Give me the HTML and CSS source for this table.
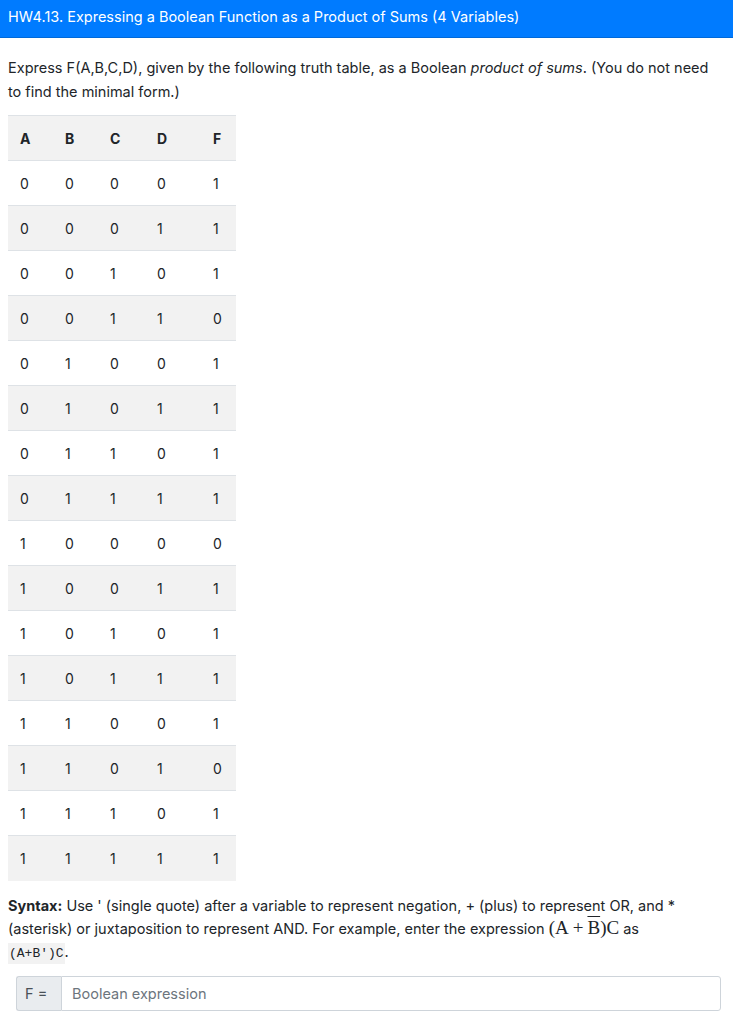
FILE: index.html
```html
<!DOCTYPE html>
<html>
<head>
<meta charset="utf-8">
<link rel="stylesheet" href="styles.css">
</head>
<body>
<div class="header">HW4.13. Expressing a Boolean Function as a Product of Sums (4 Variables)</div>
<div class="body">
<p class="intro">Express F(A,B,C,D), given by the following truth table, as a Boolean <em>product of sums</em>. (You do not need to find the minimal form.)</p>
<table class="tt">
<tbody>
<tr class="head"><th class="c1">A</th><th class="c2">B</th><th class="c3">C</th><th class="c4">D</th><th class="c5">F</th></tr>
<tr><td>0</td><td>0</td><td>0</td><td>0</td><td>1</td></tr>
<tr><td>0</td><td>0</td><td>0</td><td>1</td><td>1</td></tr>
<tr><td>0</td><td>0</td><td>1</td><td>0</td><td>1</td></tr>
<tr><td>0</td><td>0</td><td>1</td><td>1</td><td>0</td></tr>
<tr><td>0</td><td>1</td><td>0</td><td>0</td><td>1</td></tr>
<tr><td>0</td><td>1</td><td>0</td><td>1</td><td>1</td></tr>
<tr><td>0</td><td>1</td><td>1</td><td>0</td><td>1</td></tr>
<tr><td>0</td><td>1</td><td>1</td><td>1</td><td>1</td></tr>
<tr><td>1</td><td>0</td><td>0</td><td>0</td><td>0</td></tr>
<tr><td>1</td><td>0</td><td>0</td><td>1</td><td>1</td></tr>
<tr><td>1</td><td>0</td><td>1</td><td>0</td><td>1</td></tr>
<tr><td>1</td><td>0</td><td>1</td><td>1</td><td>1</td></tr>
<tr><td>1</td><td>1</td><td>0</td><td>0</td><td>1</td></tr>
<tr><td>1</td><td>1</td><td>0</td><td>1</td><td>0</td></tr>
<tr><td>1</td><td>1</td><td>1</td><td>0</td><td>1</td></tr>
<tr><td>1</td><td>1</td><td>1</td><td>1</td><td>1</td></tr>
</tbody>
</table>
<p class="syntax"><strong>Syntax:</strong> Use ' (single quote) after a variable to represent negation, + (plus) to represent OR, and * (asterisk) or juxtaposition to represent AND. For example, enter the expression <span class="math">(A<span class="op">+</span><span class="bar">B</span>)C</span> as <span class="nw"><code>(A+B')C</code>.</span></p>
<div class="ig">
<span class="addon">F =</span>
<input class="inp" type="text" placeholder="Boolean expression">
</div>
</div>
</body>
</html>
```
FILE: styles.css
```css
html, body {
  margin: 0;
  padding: 0;
  background: #fff;
}
body {
  font-family: Inter, "Noto Sans", sans-serif;
  color: #212529;
  font-size: 15px;
}
.header {
  background: #007bff;
  color: #fff;
  height: 38px;
  line-height: 33px;
  padding: 0 8px;
  font-size: 14.5px;
  box-sizing: border-box;
  border-bottom: 1px solid #0069d9;
}
.body {
  padding: 0 8px;
}
.intro {
  margin: 18px 0 0 0;
  line-height: 24px;
  font-size: 14.5px;
}
.tt {
  border-collapse: collapse;
  margin-top: 11px;
  font-size: 14px;
}
.tt th, .tt td {
  height: 45px;
  padding: 0 0 0 12px;
  text-align: left;
  border-top: 1px solid #dee2e6;
  box-sizing: border-box;
  vertical-align: middle;
}
.tt th { font-weight: 700; }
.tt tr:nth-child(odd) { background: #f2f2f2; }
.c1 { width: 45px; }
.c2 { width: 45px; }
.c3 { width: 47px; }
.c4 { width: 56px; }
.c5 { width: 35px; }
.syntax {
  margin: 13px 30px 0 0;
  line-height: 23px;
  font-size: 14.5px;
}
.nw { white-space: nowrap; }
.math {
  font-family: "Liberation Serif", serif;
  font-size: 19px;
  line-height: 0;
}
.op { margin: 0 4px; }
.bar { text-decoration: overline; text-decoration-thickness: 1px; }
code {
  font-family: "Liberation Mono", monospace;
  font-size: 13px;
  line-height: 0;
  background: #f2f2f2;
  color: #212529;
  padding: 3px 1px;
}
.ig {
  display: flex;
  margin: 13px 4px 0 8px;
  height: 35px;
}
.addon {
  display: flex;
  align-items: center;
  padding: 0 8px;
  background: #e9ecef;
  border: 1px solid #ced4da;
  border-right: none;
  border-radius: 3px 0 0 3px;
  color: #495057;
  font-size: 14.5px;
  width: 28px;
}
.inp {
  flex: 1;
  border: 1px solid #ced4da;
  border-radius: 0 3px 3px 0;
  padding: 0 10px;
  font-family: Inter, "Noto Sans", sans-serif;
  font-size: 14.5px;
  color: #495057;
  outline: none;
}
.inp::placeholder { color: #6c757d; }
```
